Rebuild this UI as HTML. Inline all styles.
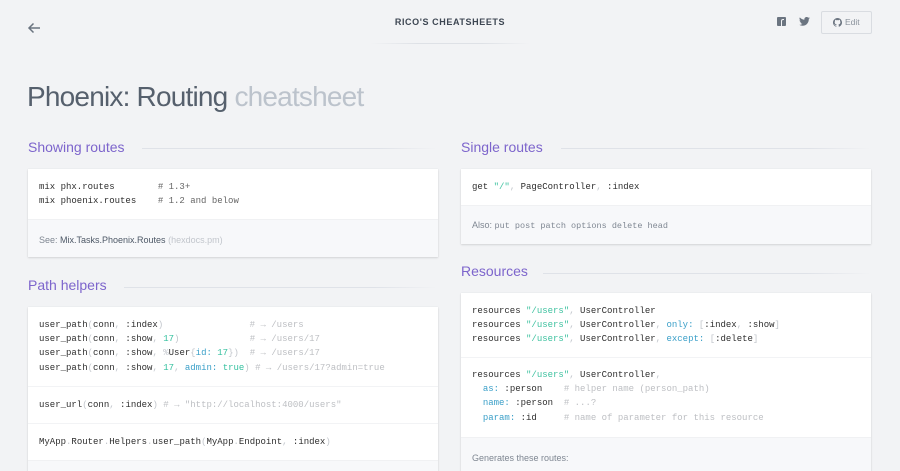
<!DOCTYPE html>
<html style="overflow:hidden;height:471px"><head><meta charset="utf-8"><style>
*{margin:0;padding:0;box-sizing:border-box}
body{width:900px;height:471px;overflow:hidden;background:#f2f3f5;font-family:"Liberation Sans",sans-serif;position:relative;color:#333}
.abs{position:absolute}
.h2{position:absolute;font-size:14px;color:#7d65cc;}
.rule{position:absolute;height:1px;background:linear-gradient(90deg,#dfe2e8,#dfe2e8 80%,rgba(223,226,232,0))}
.card{position:absolute;background:#fff;box-shadow:0 1px 2px rgba(0,0,0,.12),0 0 1px rgba(0,0,0,.08)}
pre{font-family:"Liberation Mono",monospace;font-size:9px;line-height:14.2px;color:#2e2e2e;position:absolute;left:11px}
.foot{position:absolute;left:0;right:0;background:#f7f8fa;border-top:1px solid #f0f1f3}
.ft{position:absolute;left:11px;font-size:9px;color:#7f8792}
.p{color:#c2c6cc}.s{color:#3fc2a0}.n{color:#36c1a0}.k{color:#3a9fc8}.c{color:#bdbfc3}
</style></head><body>
<svg class="abs" style="left:27px;top:22px" width="14" height="12" viewBox="0 0 14 12"><path d="M13 6H2M6.5 1.5L2 6l4.5 4.5" fill="none" stroke="#6b7480" stroke-width="1.5"/></svg>
<div class="abs" style="left:0;width:900px;top:17px;text-align:center;font-size:9px;font-weight:bold;letter-spacing:.6px;color:#3d4652">RICO'S CHEATSHEETS</div>
<div class="abs" style="left:370px;width:160px;top:43px;height:1px;background:linear-gradient(90deg,rgba(222,225,230,0),#dee1e6 30%,#dee1e6 70%,rgba(222,225,230,0))"></div>
<div class="abs" style="left:777px;top:17px;width:9px;height:9px;background:#6b7480;border-radius:1px"></div>
<div class="abs" style="left:781px;top:19px;width:3px;height:7px;border-left:1.5px solid #f2f3f5;border-top:1.5px solid #f2f3f5;border-top-left-radius:2px"></div>
<svg class="abs" style="left:799px;top:17px" width="11" height="9" viewBox="0 0 24 20"><path d="M24 2.4a10 10 0 0 1-2.8.8A5 5 0 0 0 23.3.4a10 10 0 0 1-3.1 1.2A4.9 4.9 0 0 0 11.8 6 14 14 0 0 1 1.7.9a4.9 4.9 0 0 0 1.5 6.6A4.9 4.9 0 0 1 1 6.9a4.9 4.9 0 0 0 3.900 4.8 5 5 0 0 1-2.2.1 4.9 4.9 0 0 0 4.6 3.4A9.9 9.9 0 0 1 0 17.3 14 14 0 0 0 7.5 19.5c9.1 0 14-7.5 14-14v-.6A10 10 0 0 0 24 2.4z" fill="#6b7480"/></svg>
<div class="abs" style="left:821px;top:11px;width:51px;height:23px;border:1px solid #d9dce1;border-radius:2px"></div>
<svg class="abs" style="left:833px;top:18px" width="9" height="9" viewBox="0 0 16 16"><path d="M8 0a8 8 0 0 0-2.5 15.6c.4 0 .5-.2.5-.4v-1.5c-2.2.5-2.7-1-2.7-1-.4-.9-.9-1.2-.9-1.2-.7-.5.1-.5.1-.5.8.1 1.2.8 1.2.8.7 1.3 1.9.9 2.4.7 0-.5.3-.9.5-1.1-1.8-.2-3.600-.9-3.600-4 0-.9.3-1.6.8-2.1-.1-.2-.4-1 .1-2.1 0 0 .7-.2 2.2.8a7.4 7.4 0 0 1 4 0c1.5-1 2.2-.8 2.2-.8.4 1.1.2 1.9.1 2.1.5.6.8 1.3.8 2.1 0 3.1-1.9 3.8-3.600 4 .3.3.6.7.6 1.5v2.2c0 .2.1.5.6.4A8 8 0 0 0 8 0z" fill="#6b7480"/></svg>
<div class="abs" style="left:845px;top:17px;font-size:8.5px;color:#8a929c">Edit</div>

<div class="abs" style="left:27px;top:81px;font-size:28px;letter-spacing:-0.8px;color:#56606d">Phoenix: Routing <span style="color:#bcc3cc">cheatsheet</span></div>

<div class="h2" style="left:28px;top:139px">Showing routes</div>
<div class="rule" style="left:142px;width:295px;top:148px"></div>
<div class="card" style="left:28px;top:169px;width:410px;height:88px">
<pre style="top:11px">mix phx.routes        <span style="color:#666"># 1.3+</span>
mix phoenix.routes    <span style="color:#666"># 1.2 and below</span></pre>
<div class="foot" style="top:50px;height:38px"><div class="ft" style="top:15px">See: <span style="color:#4d5866">Mix.Tasks.Phoenix.Routes</span> <span style="color:#c2c6cc">(hexdocs.pm)</span></div></div>
</div>

<div class="h2" style="left:28px;top:277px">Path helpers</div>
<div class="rule" style="left:124px;width:313px;top:287px"></div>
<div class="card" style="left:28px;top:307px;width:410px;height:170px">
<pre style="top:11px">user_path<span class="p">(</span>conn<span class="p">,</span> :index<span class="p">)</span>                <span class="c"># → /users</span>
user_path<span class="p">(</span>conn<span class="p">,</span> :show<span class="p">,</span> <span class="n">17</span><span class="p">)</span>             <span class="c"># → /users/17</span>
user_path<span class="p">(</span>conn<span class="p">,</span> :show<span class="p">,</span> <span class="p">%</span>User<span class="p">{</span><span class="k">id:</span> <span class="n">17</span><span class="p">})</span>  <span class="c"># → /users/17</span>
user_path<span class="p">(</span>conn<span class="p">,</span> :show<span class="p">,</span> <span class="n">17</span><span class="p">,</span> <span class="k">admin:</span> <span class="n">true</span><span class="p">)</span> <span class="c"># → /users/17?admin=true</span></pre>
<div class="abs" style="left:0;right:0;top:79px;height:1px;background:#f2f3f5"></div>
<pre style="top:91px">user_url<span class="p">(</span>conn<span class="p">,</span> :index<span class="p">)</span> <span class="c"># → "http://localhost:4000/users"</span></pre>
<div class="abs" style="left:0;right:0;top:116px;height:1px;background:#f2f3f5"></div>
<pre style="top:128px">MyApp<span class="p">.</span>Router<span class="p">.</span>Helpers<span class="p">.</span>user_path<span class="p">(</span>MyApp<span class="p">.</span>Endpoint<span class="p">,</span> :index<span class="p">)</span></pre>
<div class="foot" style="top:153px;height:20px"></div>
</div>

<div class="h2" style="left:461px;top:139px">Single routes</div>
<div class="rule" style="left:561px;width:310px;top:148px"></div>
<div class="card" style="left:461px;top:169px;width:410px;height:75px">
<pre style="top:11px">get <span class="s">"/"</span><span class="p">,</span> PageController<span class="p">,</span> :index</pre>
<div class="foot" style="top:36px;height:39px"><div class="ft" style="top:14px">Also: <span style="font-family:'Liberation Mono',monospace;font-size:8.5px">put post patch options delete head</span></div></div>
</div>

<div class="h2" style="left:461px;top:263px">Resources</div>
<div class="rule" style="left:543px;width:328px;top:273px"></div>
<div class="card" style="left:461px;top:293px;width:410px;height:190px">
<pre style="top:11px">resources <span class="s">"/users"</span><span class="p">,</span> UserController
resources <span class="s">"/users"</span><span class="p">,</span> UserController<span class="p">,</span> <span class="k">only:</span> <span class="p">[</span>:index<span class="p">,</span> :show<span class="p">]</span>
resources <span class="s">"/users"</span><span class="p">,</span> UserController<span class="p">,</span> <span class="k">except:</span> <span class="p">[</span>:delete<span class="p">]</span></pre>
<div class="abs" style="left:0;right:0;top:64px;height:1px;background:#f2f3f5"></div>
<pre style="top:75px">resources <span class="s">"/users"</span><span class="p">,</span> UserController<span class="p">,</span>
  <span class="k">as:</span> :person    <span class="c"># helper name (person_path)</span>
  <span class="k">name:</span> :person  <span class="c"># ...?</span>
  <span class="k">param:</span> :id     <span class="c"># name of parameter for this resource</span></pre>
<div class="foot" style="top:144px;height:46px"><div class="ft" style="top:15px">Generates these routes:</div></div>
</div>
</body></html>
